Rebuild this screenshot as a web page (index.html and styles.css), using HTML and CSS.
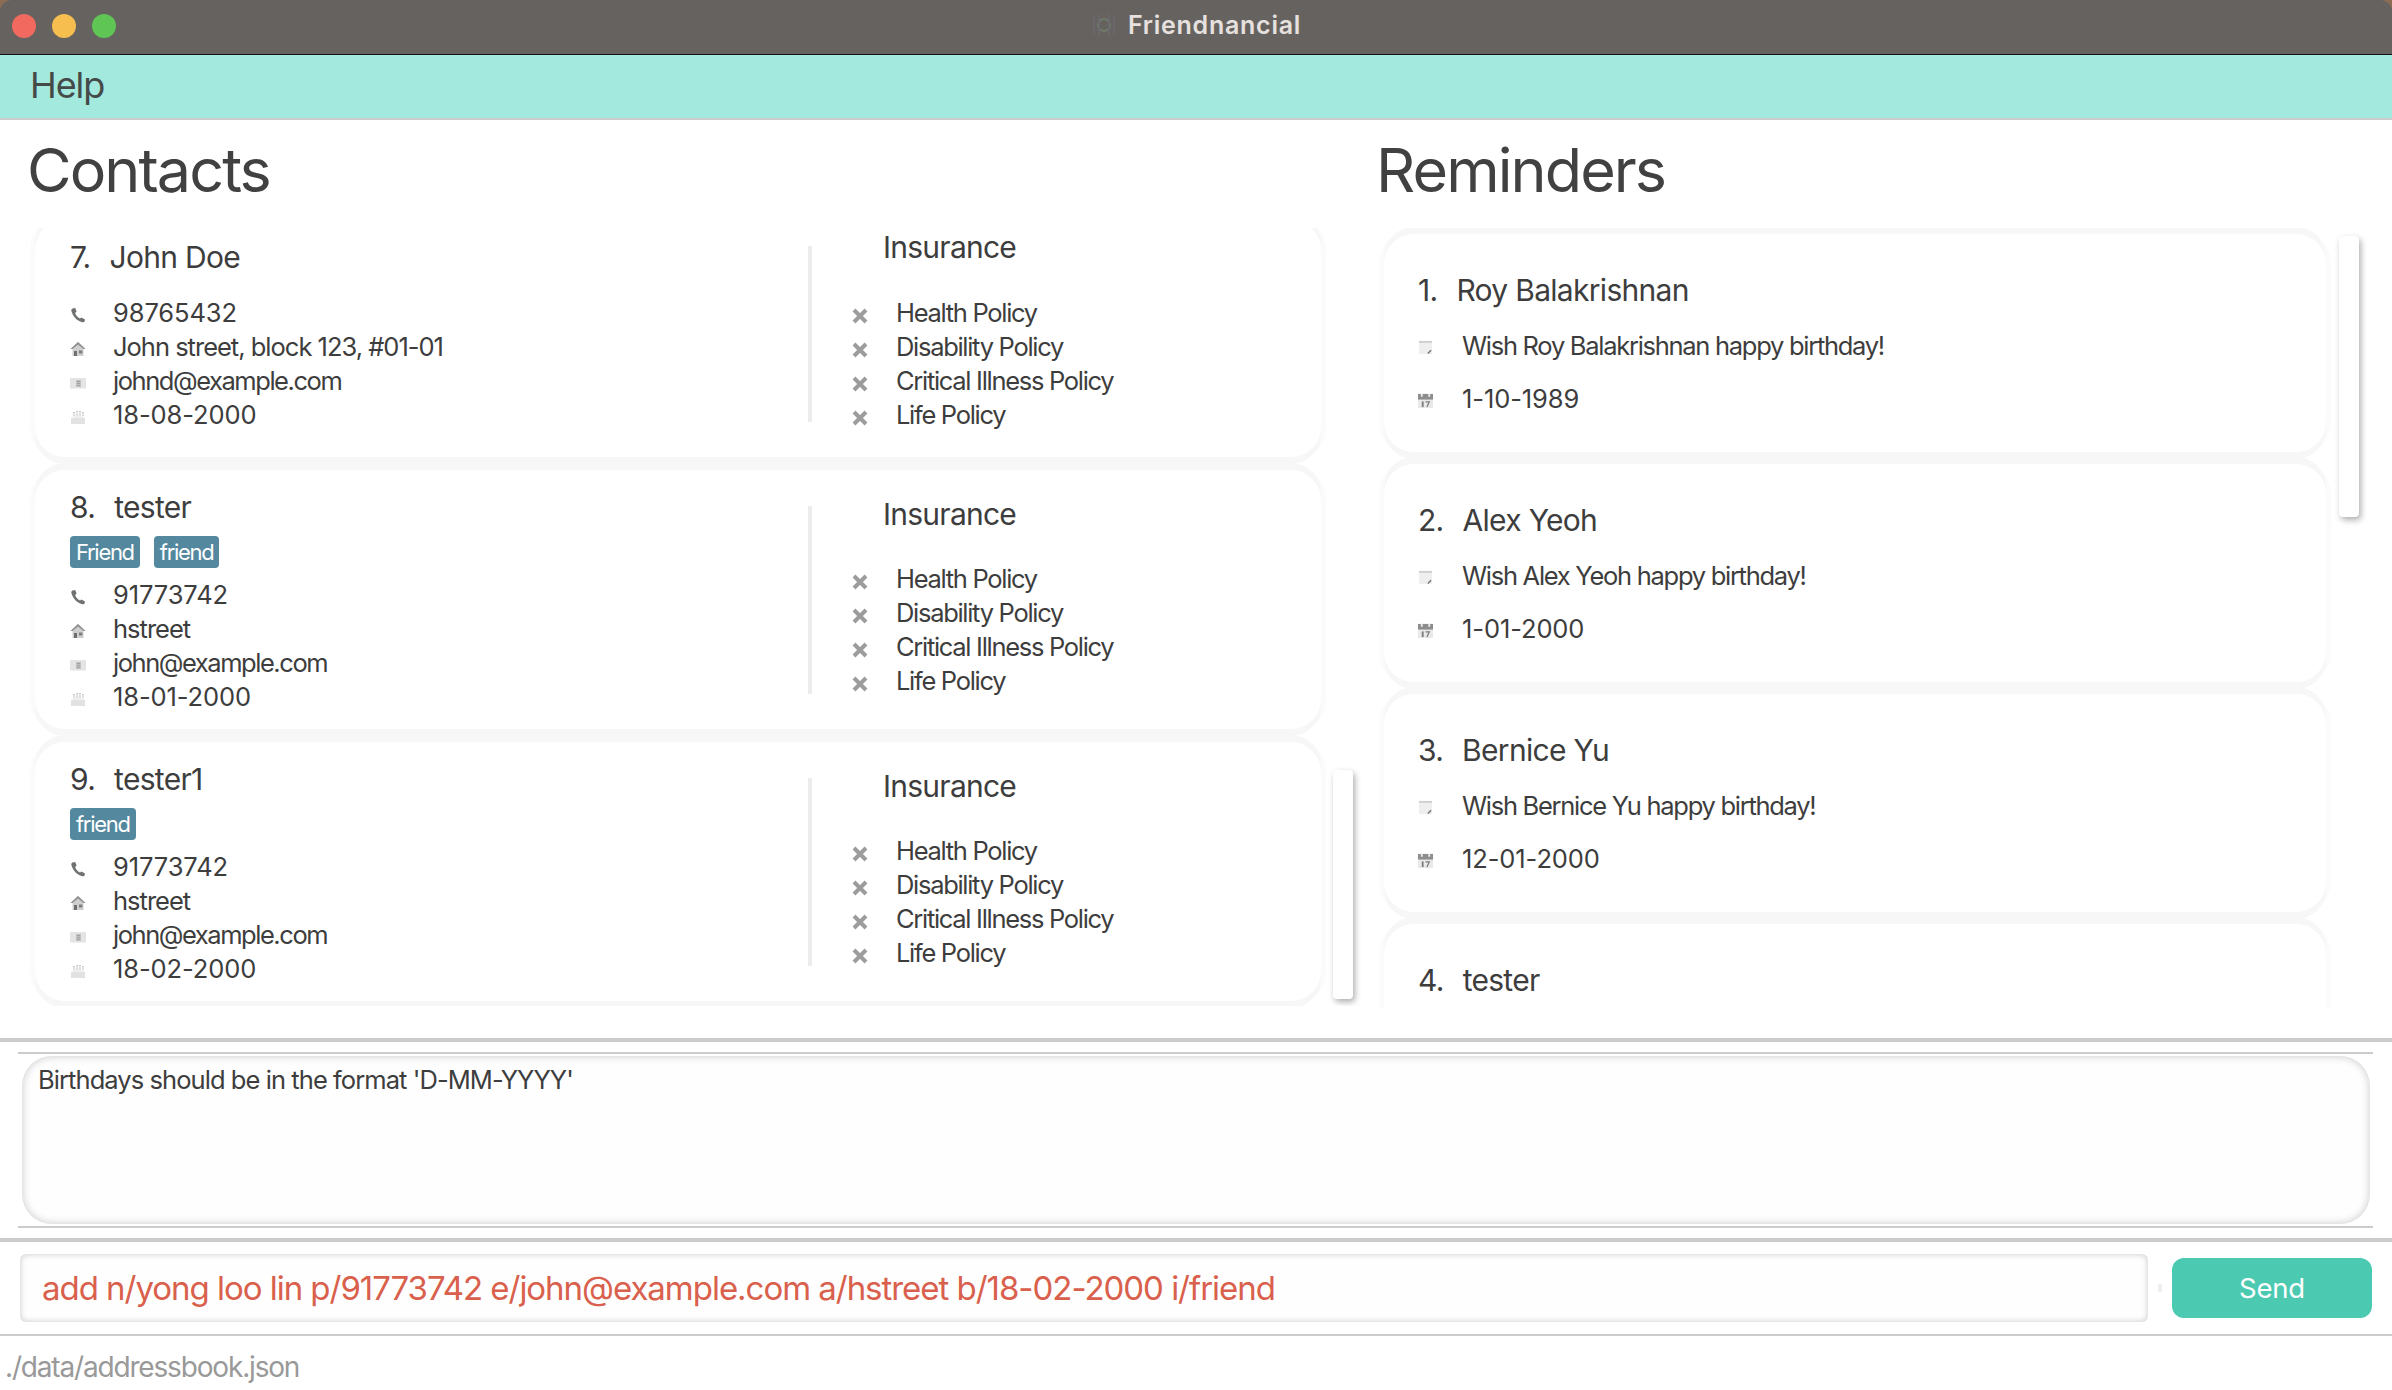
FILE: index.html
```html
<!DOCTYPE html>
<html lang="en">
<head>
<meta charset="utf-8">
<title>Friendnancial</title>
<link rel="stylesheet" href="styles.css">
</head>
<body>
<svg class="sprites" width="0" height="0" aria-hidden="true">
  <defs>
    <symbol id="i-phone" viewBox="0 0 16 16"><path d="M2.5 1.5 L5.2 1 L6.6 4.6 L5.2 6 C5.9 8.2 7.6 10.4 10 11.6 L11.4 10.6 L15 12.4 L14.6 14.6 C14.2 15.3 13 15.4 11.6 15 C6.4 13.4 2.6 9 1.4 4 C1.1 2.9 1.6 1.9 2.5 1.5 Z" fill="#6f7172"/></symbol>
    <symbol id="i-house" viewBox="0 0 16 16"><path d="M8 1 L15.5 8 L13.5 8 L13.5 15 L2.5 15 L2.5 8 L.5 8 Z" fill="#cfcfcf"/><path d="M8 1 L15.5 8 L13.5 8 L8 3.4 L2.5 8 L.5 8 Z" fill="#8f8f8f"/><rect x="4" y="10" width="3" height="5" fill="#6f6f6f"/><rect x="9" y="9.5" width="3.4" height="3" fill="#7f7f7f"/></symbol>
    <symbol id="i-mail" viewBox="0 0 16 16"><rect x="0" y="3" width="16" height="10.5" fill="#e4e4e4"/><path d="M6 5 H11 V12 H6 Z" fill="#c2c2c2"/><path d="M7 6.5 H10 M7 8.5 H10 M7 10.5 H10" stroke="#9a9a9a" stroke-width=".8"/></symbol>
    <symbol id="i-cake" viewBox="0 0 16 16"><path d="M1 9 H15 V15 H1 Z" fill="#e2e2e2"/><path d="M1 9 Q4 6 8 6 Q12 6 15 9 Z" fill="#efefef"/><path d="M4 3 V7 M7 2 V7 M10 2 V7 M13 3 V7" stroke="#a8a8a8" stroke-width="1.2" stroke-dasharray="1.4 1"/></symbol>
    <symbol id="i-note" viewBox="0 0 16 16"><rect x="1" y="1" width="14" height="14" fill="#efefef"/><rect x="1" y="1" width="14" height="2" fill="#cfcfcf"/><path d="M10.5 14.5 L14 11" stroke="#777" stroke-width="1.6"/></symbol>
    <symbol id="i-cal" viewBox="0 0 16 16"><rect x="0" y="1" width="16" height="15" fill="#e9e9e9"/><rect x="0" y="1" width="16" height="6" fill="#8d8d8d"/><rect x="3" y="1" width="2" height="3" fill="#e9e9e9"/><rect x="11" y="1" width="2" height="3" fill="#e9e9e9"/><rect x="4" y="9" width="2" height="6" fill="#7d7d7d"/><path d="M8 9.5 H12 L9.5 15" fill="none" stroke="#7d7d7d" stroke-width="1.4"/></symbol>
    <symbol id="i-x" viewBox="0 0 16 16"><path d="M2 2 L14 14 M14 2 L2 14" stroke="#9c9c9c" stroke-width="4"/></symbol>
  </defs>
</svg>

<div class="window">
  <header class="titlebar">
    <div class="lights">
      <span class="light red"></span>
      <span class="light yellow"></span>
      <span class="light green"></span>
    </div>
    <div class="title">
      <svg class="app-icon" viewBox="0 0 26 26" aria-hidden="true"><circle cx="13" cy="13" r="6" fill="none" stroke="#6f7a6c" stroke-width="2"/><path d="M3 4 V22 M8 2 V24 M18 2 V24 M23 4 V22" stroke="#6b6a70" stroke-width="1.6"/></svg>
      <span>Friendnancial</span>
    </div>
  </header>

  <nav class="menubar"><span class="menu-item">Help</span></nav>

  <main class="panels">
    <section class="panel panel-contacts">
      <h1 class="panel-title">Contacts</h1>
      <div class="list">
        <article class="card contact plain first">
          <div class="person">
            <div class="name"><span class="idx">7.</span>John Doe</div>
            <ul class="rows">
              <li class="num"><svg class="ico"><use href="#i-phone"/></svg>98765432</li>
              <li><svg class="ico"><use href="#i-house"/></svg>John street, block 123, #01-01</li>
              <li class="email"><svg class="ico"><use href="#i-mail"/></svg>johnd@example.com</li>
              <li class="num"><svg class="ico"><use href="#i-cake"/></svg>18-08-2000</li>
            </ul>
          </div>
          <div class="vline"></div>
          <div class="insurance">
            <div class="ins-title">Insurance</div>
            <ul class="policies">
              <li><svg class="x"><use href="#i-x"/></svg>Health Policy</li>
              <li><svg class="x"><use href="#i-x"/></svg>Disability Policy</li>
              <li><svg class="x"><use href="#i-x"/></svg>Critical Illness Policy</li>
              <li><svg class="x"><use href="#i-x"/></svg>Life Policy</li>
            </ul>
          </div>
        </article>

        <article class="card contact">
          <div class="person">
            <div class="name"><span class="idx">8.</span>tester</div>
            <div class="tags"><span class="tag">Friend</span><span class="tag">friend</span></div>
            <ul class="rows">
              <li class="num"><svg class="ico"><use href="#i-phone"/></svg>91773742</li>
              <li><svg class="ico"><use href="#i-house"/></svg>hstreet</li>
              <li class="email"><svg class="ico"><use href="#i-mail"/></svg>john@example.com</li>
              <li class="num"><svg class="ico"><use href="#i-cake"/></svg>18-01-2000</li>
            </ul>
          </div>
          <div class="vline"></div>
          <div class="insurance">
            <div class="ins-title">Insurance</div>
            <ul class="policies">
              <li><svg class="x"><use href="#i-x"/></svg>Health Policy</li>
              <li><svg class="x"><use href="#i-x"/></svg>Disability Policy</li>
              <li><svg class="x"><use href="#i-x"/></svg>Critical Illness Policy</li>
              <li><svg class="x"><use href="#i-x"/></svg>Life Policy</li>
            </ul>
          </div>
        </article>

        <article class="card contact">
          <div class="person">
            <div class="name"><span class="idx">9.</span>tester1</div>
            <div class="tags"><span class="tag">friend</span></div>
            <ul class="rows">
              <li class="num"><svg class="ico"><use href="#i-phone"/></svg>91773742</li>
              <li><svg class="ico"><use href="#i-house"/></svg>hstreet</li>
              <li class="email"><svg class="ico"><use href="#i-mail"/></svg>john@example.com</li>
              <li class="num"><svg class="ico"><use href="#i-cake"/></svg>18-02-2000</li>
            </ul>
          </div>
          <div class="vline"></div>
          <div class="insurance">
            <div class="ins-title">Insurance</div>
            <ul class="policies">
              <li><svg class="x"><use href="#i-x"/></svg>Health Policy</li>
              <li><svg class="x"><use href="#i-x"/></svg>Disability Policy</li>
              <li><svg class="x"><use href="#i-x"/></svg>Critical Illness Policy</li>
              <li><svg class="x"><use href="#i-x"/></svg>Life Policy</li>
            </ul>
          </div>
        </article>
        <div class="scrollbar scrollbar-contacts"></div>
      </div>
    </section>

    <section class="panel panel-reminders">
      <h1 class="panel-title">Reminders</h1>
      <div class="list list-reminders">
        <article class="card reminder">
          <div class="name"><span class="idx">1.</span>Roy Balakrishnan</div>
          <div class="rem-row rem-desc"><svg class="ico-sm"><use href="#i-note"/></svg>Wish Roy Balakrishnan happy birthday!</div>
          <div class="rem-row rem-date"><svg class="ico-sm"><use href="#i-cal"/></svg>1-10-1989</div>
        </article>
        <article class="card reminder">
          <div class="name"><span class="idx">2.</span>Alex Yeoh</div>
          <div class="rem-row rem-desc"><svg class="ico-sm"><use href="#i-note"/></svg>Wish Alex Yeoh happy birthday!</div>
          <div class="rem-row rem-date"><svg class="ico-sm"><use href="#i-cal"/></svg>1-01-2000</div>
        </article>
        <article class="card reminder">
          <div class="name"><span class="idx">3.</span>Bernice Yu</div>
          <div class="rem-row rem-desc"><svg class="ico-sm"><use href="#i-note"/></svg>Wish Bernice Yu happy birthday!</div>
          <div class="rem-row rem-date"><svg class="ico-sm"><use href="#i-cal"/></svg>12-01-2000</div>
        </article>
        <article class="card reminder">
          <div class="name"><span class="idx">4.</span>tester</div>
        </article>
        <div class="scrollbar scrollbar-reminders"></div>
      </div>
    </section>
  </main>

  <section class="result-wrap">
    <div class="result-inner">
      <div class="result">Birthdays should be in the format 'D-MM-YYYY'</div>
    </div>
  </section>

  <section class="command">
    <div class="command-input">add n/yong loo lin p/91773742 e/john@example.com a/hstreet b/18-02-2000 i/friend</div>
    <span class="grip"></span>
    <button class="send" type="button">Send</button>
  </section>

  <footer class="status">./data/addressbook.json</footer>
</div>
</body>
</html>
```
FILE: styles.css
```css
* { box-sizing: border-box; }
html, body { margin: 0; padding: 0; }
body {
  width: 2392px;
  height: 1390px;
  overflow: hidden;
  background: #8a6c52;
  font-family: Inter, "Liberation Sans", sans-serif;
  color: #3d3d3d;
}
ul { list-style: none; margin: 0; padding: 0; }
.sprites { position: absolute; }

.window { display: flex; flex-direction: column; height: 1390px; }

.titlebar {
  flex: none;
  position: relative;
  display: flex;
  align-items: center;
  justify-content: center;
  height: 55px;
  padding-bottom: 4px;
  background: #666260;
  border-bottom: 1px solid #111;
  border-radius: 12px 12px 0 0;
}
.lights { position: absolute; left: 12px; top: 14px; display: flex; gap: 16px; }
.light { width: 24px; height: 24px; border-radius: 50%; }
.red { background: #f1695f; }
.yellow { background: #f6be4f; }
.green { background: #5fc554; }
.title {
  display: flex;
  align-items: center;
  gap: 11px;
  font-size: 25px;
  font-weight: 600;
  letter-spacing: 0.75px;
  color: #e6e1de;
}
.app-icon { width: 26px; height: 26px; }

.menubar {
  flex: none;
  display: flex;
  align-items: center;
  height: 65px;
  padding: 0 0 3px 30px;
  background: #a3e9dd;
  border-bottom: 2px solid #ccc;
}
.menu-item { font-size: 36px; letter-spacing: -1.1px; color: #454a49; }

.panels {
  flex: none;
  display: flex;
  height: 918px;
  background: #fff;
}
.panel { display: flex; flex-direction: column; height: 918px; }
.panel-contacts { width: 1378px; padding-left: 29px; }
.panel-reminders { width: 1014px; }
.panel-title {
  flex: none;
  height: 108px;
  margin: 0 0 0 -2px;
  font-size: 61px;
  line-height: 101px;
  font-weight: 400;
  letter-spacing: -1.9px;
  color: #414141;
}

.list {
  position: relative;
  height: 778px;
  overflow: hidden;
  padding-left: 6px;
  display: flex;
  flex-direction: column;
  gap: 13px;
}
.list-reminders {
  height: 780px;
  padding-top: 6px;
  gap: 12px;
}

.card {
  flex: none;
  background: #fff;
  border-radius: 30px;
  box-shadow: 0 7px 0 0 #f7f7f7, 0 -7px 0 0 #f7f7f7, 0 0 0 5px #fbfbfb;
}
.contact {
  display: flex;
  width: 1286px;
  height: 259px;
  padding: 18px 0 0 35px;
}
.contact.plain { height: 237px; }
.first { margin-top: -8px; }

.person { width: 738px; flex: none; }
.name {
  height: 38px;
  font-size: 30px;
  line-height: 38px;
  letter-spacing: -0.7px;
}
.idx { display: inline-block; margin-right: 19px; }
.tags { display: flex; gap: 14px; margin-top: 10px; }
.tag {
  height: 32px;
  padding: 0 6px;
  background: #53889e;
  border-radius: 4px;
  color: #fff;
  font-size: 22px;
  line-height: 32px;
  letter-spacing: -1.3px;
}
.rows { margin-top: 9px; }
.plain .rows { margin-top: 19px; }
.rows li, .policies li {
  display: flex;
  align-items: center;
  height: 34px;
  font-size: 25.5px;
  white-space: nowrap;
}
.rows li { letter-spacing: -1px; }
.rows li.num { letter-spacing: -0.1px; }
.rows li.email { letter-spacing: -1.45px; }
.policies li { letter-spacing: -1.3px; }
.ico { flex: none; width: 16px; height: 16px; margin: 5px 27px 0 0; }

.vline {
  flex: none;
  width: 4px;
  height: 188px;
  margin-top: 18px;
  background: #ececec;
}
.plain .vline { height: 176px; margin-top: 8px; }

.insurance { flex: 1; padding-left: 40px; margin-top: 7px; }
.plain .insurance { margin-top: -10px; }
.ins-title {
  height: 38px;
  margin-left: 31px;
  font-size: 30px;
  line-height: 38px;
  letter-spacing: -0.75px;
}
.policies { margin-top: 28px; }
.plain .policies { margin-top: 29px; }
.x { flex: none; width: 16px; height: 16px; margin: 7px 28px 0 0; }

.reminder {
  width: 942px;
  height: 218px;
  padding: 37px 0 0 34px;
}
.rem-row {
  display: flex;
  align-items: center;
  height: 34px;
  font-size: 25.5px;
}
.rem-desc { margin-top: 19px; letter-spacing: -1.28px; }
.rem-date { margin-top: 19px; letter-spacing: -0.1px; }
.ico-sm { flex: none; width: 15px; height: 15px; margin: 5px 29px 0 0; }

.scrollbar {
  position: absolute;
  width: 20px;
  background: #fff;
  border-radius: 4px;
  box-shadow: 2px 3px 6px rgba(0, 0, 0, 0.32);
}
.scrollbar-contacts { left: 1304px; top: 542px; height: 229px; }
.scrollbar-reminders { left: 961px; top: 8px; height: 281px; }

.result-wrap {
  flex: none;
  height: 204px;
  padding: 10px 0 0 18px;
  background: #fff;
  border-top: 4px solid #ccc;
  border-bottom: 4px solid #ccc;
}
.result-inner {
  width: 2355px;
  height: 176px;
  padding: 2px 3px 0 4px;
  border-top: 2px solid #ccc;
  border-bottom: 2px solid #ccc;
}
.result {
  width: 2348px;
  height: 168px;
  padding: 7px 0 0 16px;
  border-radius: 30px;
  background: #fefefe;
  box-shadow: inset 0 0 8px rgba(0, 0, 0, 0.22);
  font-size: 25.5px;
  line-height: 34px;
  letter-spacing: -0.93px;
}

.command {
  flex: none;
  display: flex;
  align-items: center;
  height: 94px;
  padding-left: 20px;
  background: #fff;
  border-bottom: 2px solid #ccc;
}
.command-input {
  width: 2128px;
  height: 68px;
  padding-left: 22px;
  border-radius: 6px;
  background: #fefefe;
  box-shadow: inset 0 0 6px rgba(0, 0, 0, 0.22);
  color: #d9604c;
  font-size: 33px;
  line-height: 68px;
  letter-spacing: -1.03px;
  white-space: nowrap;
}
.grip { width: 4px; height: 8px; margin: 0 10px; background: #eee; }
.send {
  width: 200px;
  height: 60px;
  padding: 0;
  border: 0;
  border-radius: 12px;
  background: #4bcab1;
  color: #fff;
  font-family: inherit;
  font-size: 27.5px;
  letter-spacing: -0.2px;
}

.status {
  flex: 1;
  padding-left: 5px;
  background: #fff;
  color: #999;
  font-size: 28px;
  line-height: 62px;
  letter-spacing: -1.17px;
}
```
